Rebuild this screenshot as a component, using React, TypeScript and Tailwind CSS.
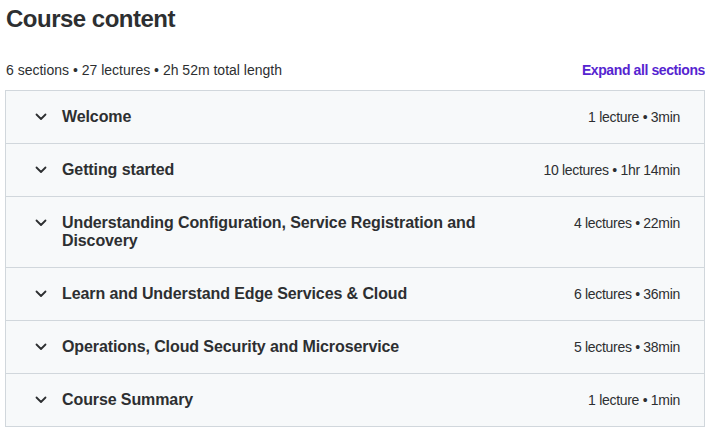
const sections = [
  { title: "Welcome", meta: "1 lecture • 3min" },
  { title: "Getting started", meta: "10 lectures • 1hr 14min" },
  {
    title: "Understanding Configuration, Service Registration and Discovery",
    meta: "4 lectures • 22min",
  },
  { title: "Learn and Understand Edge Services & Cloud", meta: "6 lectures • 36min" },
  { title: "Operations, Cloud Security and Microservice", meta: "5 lectures • 38min" },
  { title: "Course Summary", meta: "1 lecture • 1min" },
]

function Chevron() {
  return (
    <svg
      width="12"
      height="8"
      viewBox="0 0 12 8"
      className="mt-[5px] shrink-0"
      fill="none"
      stroke="#2d2f31"
      strokeWidth="1.8"
      strokeLinecap="round"
      strokeLinejoin="round"
    >
      <path d="M1.5 1.5 L6 6 L10.5 1.5" />
    </svg>
  )
}

export default function App() {
  return (
    <div
      className="w-[705px] h-[427px] overflow-hidden bg-white pl-[5px] text-[#2d2f31]"
      style={{ fontFamily: '"Liberation Sans", Arial, sans-serif' }}
    >
      <h2 className="pl-px pt-[5px] text-[24px] leading-[28px] font-bold tracking-[-0.5px]">
        Course content
      </h2>
      <div className="mt-[27px] flex items-center justify-between pl-px">
        <span className="text-[14px] leading-[20px]">
          6 sections • 27 lectures • 2h 52m total length
        </span>
        <button className="text-[14px] leading-[20px] font-bold tracking-[-0.4px] text-[#5624d0]">
          Expand all sections
        </button>
      </div>
      <div className="mt-[10px] border border-[#d1d7dc] bg-[#f7f9fa]">
        {sections.map((s, i) => (
          <div
            key={s.title}
            className={
              "flex items-start pl-[29px] pr-[24px] pt-[17px] pb-[17px] " +
              (i > 0 ? "border-t border-[#d1d7dc]" : "")
            }
          >
            <Chevron />
            <div className="ml-[15px] max-w-[440px] text-[16px] leading-[18px] font-bold tracking-[-0.1px]">
              {s.title}
            </div>
            <div className="ml-auto pl-4 text-[14px] leading-[18px] tracking-[-0.3px] whitespace-nowrap">
              {s.meta}
            </div>
          </div>
        ))}
      </div>
    </div>
  )
}
